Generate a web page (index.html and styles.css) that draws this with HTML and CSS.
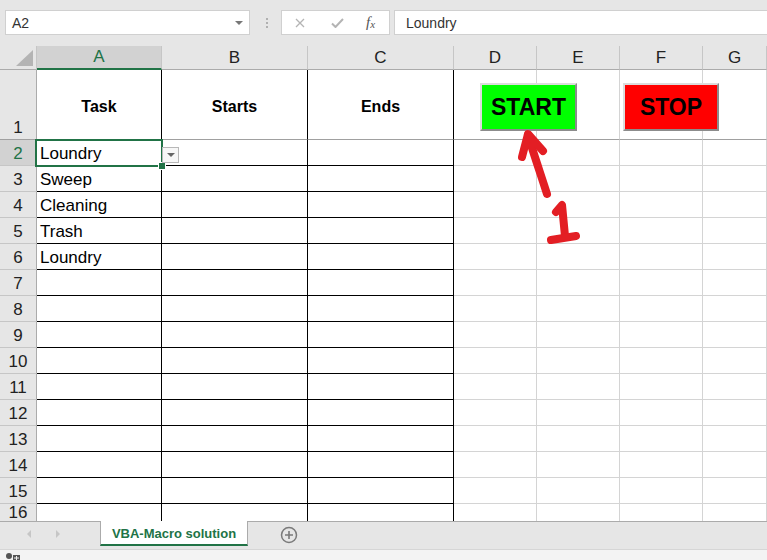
FILE: index.html
```html
<!DOCTYPE html>
<html lang="en">
<head>
    <meta charset="UTF-8">
    <title>VBA-Macro solution</title>
    <link rel="stylesheet" href="styles.css">
</head>
<body>
<div class="app">
    <!-- formula bar -->
    <div class="formula-bar">
        <div class="name-box"><span>A2</span><span class="caret"></span></div>
        <div class="dots"></div>
        <div class="fx-box">
            <svg class="fx-cancel" width="10" height="10" viewBox="0 0 10 10"><path d="M1 1L9 9M9 1L1 9" stroke="#b4b4b4" stroke-width="1.3" fill="none"/></svg>
            <svg class="fx-enter" width="13" height="10" viewBox="0 0 13 10"><path d="M1 5.5L4.5 9L12 1" stroke="#b4b4b4" stroke-width="2" fill="none"/></svg>
            <span class="fx"><i>f</i><i class="fx-sub">x</i></span>
        </div>
        <div class="formula-input">Loundry</div>
    </div>

    <!-- sheet grid -->
    <div class="sheet">
        <div class="corner"><span class="corner-tri"></span></div>
        <div class="ch sel">A</div><div class="ch">B</div><div class="ch">C</div><div class="ch">D</div><div class="ch">E</div><div class="ch">F</div><div class="ch">G</div>

        <div class="rh r1">1</div><div class="t r1 head">Task</div><div class="t r1 head">Starts</div><div class="t r1 head">Ends</div><div class="c r1"></div><div class="c r1"></div><div class="c r1"></div><div class="c r1"></div>
        <div class="rh sel">2</div><div class="t">Loundry</div><div class="t"></div><div class="t"></div><div class="c"></div><div class="c"></div><div class="c"></div><div class="c"></div>
        <div class="rh">3</div><div class="t">Sweep</div><div class="t"></div><div class="t"></div><div class="c"></div><div class="c"></div><div class="c"></div><div class="c"></div>
        <div class="rh">4</div><div class="t">Cleaning</div><div class="t"></div><div class="t"></div><div class="c"></div><div class="c"></div><div class="c"></div><div class="c"></div>
        <div class="rh">5</div><div class="t">Trash</div><div class="t"></div><div class="t"></div><div class="c"></div><div class="c"></div><div class="c"></div><div class="c"></div>
        <div class="rh">6</div><div class="t">Loundry</div><div class="t"></div><div class="t"></div><div class="c"></div><div class="c"></div><div class="c"></div><div class="c"></div>
        <div class="rh">7</div><div class="t"></div><div class="t"></div><div class="t"></div><div class="c"></div><div class="c"></div><div class="c"></div><div class="c"></div>
        <div class="rh">8</div><div class="t"></div><div class="t"></div><div class="t"></div><div class="c"></div><div class="c"></div><div class="c"></div><div class="c"></div>
        <div class="rh">9</div><div class="t"></div><div class="t"></div><div class="t"></div><div class="c"></div><div class="c"></div><div class="c"></div><div class="c"></div>
        <div class="rh">10</div><div class="t"></div><div class="t"></div><div class="t"></div><div class="c"></div><div class="c"></div><div class="c"></div><div class="c"></div>
        <div class="rh">11</div><div class="t"></div><div class="t"></div><div class="t"></div><div class="c"></div><div class="c"></div><div class="c"></div><div class="c"></div>
        <div class="rh">12</div><div class="t"></div><div class="t"></div><div class="t"></div><div class="c"></div><div class="c"></div><div class="c"></div><div class="c"></div>
        <div class="rh">13</div><div class="t"></div><div class="t"></div><div class="t"></div><div class="c"></div><div class="c"></div><div class="c"></div><div class="c"></div>
        <div class="rh">14</div><div class="t"></div><div class="t"></div><div class="t"></div><div class="c"></div><div class="c"></div><div class="c"></div><div class="c"></div>
        <div class="rh">15</div><div class="t"></div><div class="t"></div><div class="t"></div><div class="c"></div><div class="c"></div><div class="c"></div><div class="c"></div>
        <div class="rh last">16</div><div class="t last"></div><div class="t last"></div><div class="t last"></div><div class="c last"></div><div class="c last"></div><div class="c last"></div><div class="c last"></div>
    </div>

    <!-- sheet tabs -->
    <div class="tabbar">
        <span class="nav-left"></span>
        <span class="nav-right"></span>
        <div class="tab">VBA-Macro solution</div>
        <svg class="add-sheet" width="18" height="18" viewBox="0 0 18 18">
            <circle cx="9" cy="9" r="7.5" stroke="#7a7a7a" stroke-width="1.5" fill="none"/>
            <path d="M9 5V13M5 9H13" stroke="#7a7a7a" stroke-width="1.6"/>
        </svg>
    </div>
    <div class="statusbar">
        <svg width="16" height="10" viewBox="0 0 16 10"><circle cx="3" cy="4" r="3" fill="#555"/><rect x="7" y="3" width="7" height="7" fill="#555"/><path d="M8 6H13M10.5 4V10" stroke="#f3f3f3" stroke-width="1"/></svg>
    </div>

    <!-- things lying over the sheet -->
    <div class="selection"><span class="fill-handle"></span></div>
    <div class="dropdown"><span class="dropdown-tri"></span></div>
    <div class="macro-btn start">START</div>
    <div class="macro-btn stop">STOP</div>
    <svg class="annot" width="767" height="560" viewBox="0 0 767 560">
        <g stroke="#e31e24" stroke-width="8" fill="none" stroke-linecap="round" stroke-linejoin="round">
            <path d="M547 194C542 178 533 152 528 135"/>
            <path d="M522 157L528 134L543 151"/>
            <path d="M556 212L562 205L565 236"/>
            <path d="M551 240L576 236"/>
        </g>
    </svg>
</div>
</body>
</html>
```

FILE: styles.css
```css
body {
    margin: 0;
    font-family: "Liberation Sans", Arial, sans-serif;
    background: #fff;
}

.app {
    position: relative;
    width: 767px;
    height: 560px;
    overflow: hidden;
    display: flex;
    flex-direction: column;
}

/* formula bar */
.formula-bar {
    height: 46px;
    flex-shrink: 0;
    box-sizing: border-box;
    padding-top: 10px;
    background: #e6e6e6;
    display: flex;
    align-items: flex-start;
}

.name-box {
    margin-left: 5px;
    width: 245px;
    height: 25px;
    box-sizing: border-box;
    padding: 0 6px 0 6px;
    background: #fff;
    border: 1px solid #d0d0d0;
    display: flex;
    align-items: center;
    justify-content: space-between;
    font-size: 14px;
    color: #333;
}

.caret {
    width: 0;
    height: 0;
    border-top: 4px solid #777;
    border-left: 4px solid transparent;
    border-right: 4px solid transparent;
}

.dots {
    width: 2px;
    height: 2px;
    margin: 8px 0 0 16px;
    background: #b0b0b0;
    box-shadow: 0 4px #b0b0b0, 0 8px #b0b0b0;
}

.fx-box {
    margin-left: 13px;
    width: 109px;
    height: 25px;
    box-sizing: border-box;
    background: #fff;
    border: 1px solid #d0d0d0;
    display: flex;
    align-items: center;
}

.fx-cancel {
    margin-left: 13px;
}

.fx-enter {
    margin-left: 26px;
}

.fx {
    margin-left: 22px;
    font-family: "Liberation Serif", "Times New Roman", serif;
    font-size: 15px;
    color: #555;
}

.fx-sub {
    font-size: 11px;
    position: relative;
    top: 1px;
}

.formula-input {
    margin-left: 4px;
    flex: 1;
    height: 25px;
    box-sizing: border-box;
    padding-left: 11px;
    background: #fff;
    border: 1px solid #d0d0d0;
    border-right: none;
    display: flex;
    align-items: center;
    font-size: 14px;
    color: #333;
}

/* sheet */
.sheet {
    height: 475px;
    flex-shrink: 0;
    display: grid;
    grid-template-columns: 37px 125px 146px 146px 83px 83px 83px 1fr;
    grid-template-rows: 24px 70px repeat(14, 26px) 1fr;
}

.sheet > div {
    box-sizing: border-box;
}

.corner {
    background: #e6e6e6;
    border-right: 1px solid #c6c6c6;
    border-bottom: 1px solid #ababab;
    display: flex;
    justify-content: flex-end;
    align-items: flex-end;
    padding: 0 3px 3px 0;
}

.corner-tri {
    width: 0;
    height: 0;
    border-left: 17px solid transparent;
    border-bottom: 16px solid #b4b4b4;
}

.ch {
    background: #e6e6e6;
    border-right: 1px solid #c6c6c6;
    border-bottom: 1px solid #ababab;
    display: flex;
    align-items: center;
    justify-content: center;
    font-size: 17px;
    color: #222;
}

.ch.sel {
    background: #d2d2d2;
    color: #217346;
    border-bottom: 2px solid #217346;
}

.rh {
    background: #e6e6e6;
    border-right: 1px solid #ababab;
    border-bottom: 1px solid #c6c6c6;
    display: flex;
    justify-content: center;
    align-items: flex-end;
    padding-bottom: 3px;
    font-size: 17px;
    line-height: 17px;
    color: #222;
}

.rh.sel {
    background: #d2d2d2;
    color: #217346;
}

.c {
    border-right: 1px solid #d4d4d4;
    border-bottom: 1px solid #d4d4d4;
}

.t {
    border-right: 1px solid #000;
    border-bottom: 1px solid #000;
    display: flex;
    align-items: flex-end;
    padding: 0 0 3px 3px;
    font-size: 17px;
    line-height: 17px;
    color: #000;
}

.sheet .r1 {
    border-bottom-color: #a0a0a0;
}

.t.head {
    align-items: center;
    justify-content: center;
    padding: 3px 0 0 0;
    font-weight: bold;
    font-size: 16px;
}

.sheet .last {
    border-bottom: none;
}

/* sheet tabs */
.tabbar {
    height: 28px;
    flex-shrink: 0;
    box-sizing: border-box;
    background: #e6e6e6;
    border-top: 1px solid #ababab;
    display: flex;
    align-items: flex-start;
}

.nav-left {
    width: 0;
    height: 0;
    margin: 8px 0 0 27px;
    border-top: 4px solid transparent;
    border-bottom: 4px solid transparent;
    border-right: 4px solid #c6c6c6;
}

.nav-right {
    width: 0;
    height: 0;
    margin: 8px 0 0 25px;
    border-top: 4px solid transparent;
    border-bottom: 4px solid transparent;
    border-left: 4px solid #c6c6c6;
}

.tab {
    margin: -1px 0 0 40px;
    width: 148px;
    height: 25px;
    box-sizing: border-box;
    padding-top: 2px;
    background: #fff;
    border-left: 1px solid #ababab;
    border-right: 1px solid #ababab;
    border-bottom: 2px solid #217346;
    display: flex;
    align-items: center;
    justify-content: center;
    font-size: 13px;
    font-weight: bold;
    color: #217346;
}

.add-sheet {
    margin: 4px 0 0 32px;
}

.statusbar {
    height: 11px;
    flex-shrink: 0;
    box-sizing: border-box;
    background: #f3f3f3;
    border-top: 1px solid #d6d6d6;
    padding: 2px 0 0 6px;
    display: flex;
    align-items: flex-start;
}

/* overlays */
.selection {
    position: absolute;
    left: 35px;
    top: 139px;
    width: 128px;
    height: 28px;
    box-sizing: border-box;
    border: 2px solid #217346;
}

.fill-handle {
    position: absolute;
    right: -5px;
    bottom: -5px;
    width: 6px;
    height: 6px;
    background: #217346;
    border: 1px solid #fff;
}

.dropdown {
    position: absolute;
    left: 162px;
    top: 147px;
    width: 17px;
    height: 16px;
    box-sizing: border-box;
    background: #f7f7f7;
    border: 1px solid #b8b8b8;
    display: flex;
    align-items: center;
    justify-content: center;
}

.dropdown-tri {
    width: 0;
    height: 0;
    border-top: 4px solid #666;
    border-left: 4px solid transparent;
    border-right: 4px solid transparent;
}

.macro-btn {
    position: absolute;
    top: 83px;
    height: 48px;
    box-sizing: border-box;
    border: 2px solid;
    border-color: #dcdcdc #8c8c8c #8c8c8c #dcdcdc;
    display: flex;
    align-items: center;
    justify-content: center;
    font-size: 23px;
    font-weight: bold;
    color: #000;
}

.start {
    left: 480px;
    width: 97px;
    background: #00ff00;
}

.stop {
    left: 623px;
    width: 96px;
    background: #ff0000;
}

.annot {
    position: absolute;
    left: 0;
    top: 0;
    pointer-events: none;
}
```
